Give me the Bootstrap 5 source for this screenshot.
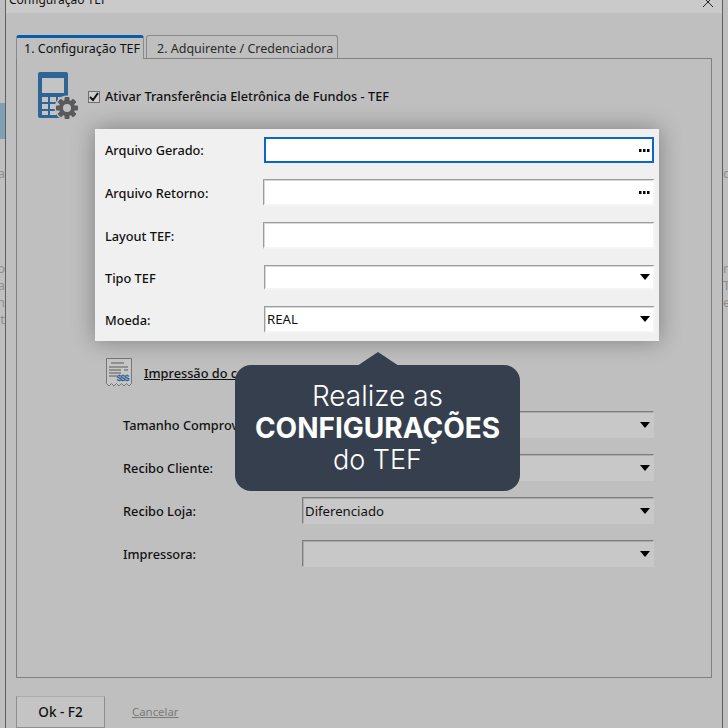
<!DOCTYPE html>
<html lang="pt-BR">
  <head>
    <meta charset="UTF-8" />
    <meta name="viewport" content="width=device-width, initial-scale=1.0" />
    <title>Configuração TEF</title>
    <link
      href="https://cdn.jsdelivr.net/npm/bootstrap@5.3.0/dist/css/bootstrap.min.css"
      rel="stylesheet"
    />
    <style>
      html, body {
        width: 728px;
        height: 728px;
        overflow: hidden;
      }
      body {
        position: relative;
        background-color: #bfbfbf;
        font-family: "Noto Sans", "Open Sans", sans-serif;
        font-size: 13px;
        color: #111;
      }
      .app-window {
        width: 718px;
        height: 728px;
        margin-left: 5px;
        border-left: 1px solid #5f5f5f;
        border-right: 1px solid #5f5f5f;
        background-color: #bfbfbf;
      }
      .title-bar {
        height: 13px;
        background-color: #cacaca;
        overflow: hidden;
        line-height: 10px;
        padding-left: 3px;
        position: relative;
      }
      .title-bar span {
        display: block;
        margin-top: -5px;
        font-size: 12px;
      }
      .title-close {
        position: absolute;
        right: 8px;
        top: -4px;
      }
      .tab-strip {
        margin: 22px 10px 0 10px;
        height: 23px;
        border-bottom: 0;
        gap: 2px;
        flex-wrap: nowrap;
      }
      .tab-strip .nav-link {
        height: 23px;
        padding: 0 7px;
        line-height: 26px;
        font-size: 12.5px;
        white-space: nowrap;
        color: #2b2b2b;
        border: 1px solid #8a8a8a;
        border-bottom: 0;
        border-radius: 3px 3px 0 0;
        background-color: #bfbfbf;
      }
      .tab-strip .nav-link.first-tab {
        width: 128px;
        color: #111;
        border: 1px solid #8a8a8a;
        border-top: 3px solid #0a5ca8;
        border-bottom: 0;
        line-height: 22px;
        background-color: #bfbfbf;
        position: relative;
        z-index: 1;
        margin-bottom: -1px;
        height: 24px;
      }
      .tab-strip .nav-link.second-tab {
        width: 192px;
        padding-left: 10px;
      }
      .tab-body {
        height: 620px;
        margin: 0 10px;
        border: 1px solid #808080;
        position: relative;
      }
      .head-row {
        height: 70px;
        padding: 13px 0 0 21px;
      }
      .check-box {
        width: 12px;
        height: 12px;
        border: 1px solid #6e6e6e;
        background-color: #cfcfcf;
        margin: 19px 5px 0 9px;
      }
      .head-label {
        margin-top: 15px;
        font-weight: 500;
        font-size: 12.75px;
      }
      .spot-panel {
        width: 564px;
        height: 212px;
        margin-left: 78px;
        padding: 8px 0 0 10px;
        background-color: #f0f0f0;
        box-shadow: 0 0 22px rgba(0, 0, 0, 0.33);
        position: relative;
      }
      .spot-row {
        height: 43px;
      }
      .spot-row.first-row {
        height: 42px;
      }
      .spot-row.short-row {
        height: 41px;
      }
      .field-label {
        width: 159px;
        padding-top: 1px;
        font-weight: 500;
        font-size: 12.75px;
        line-height: 27px;
      }
      .first-row .field-label {
        padding-top: 0;
        line-height: 26px;
      }
      .short-row .field-label {
        line-height: 25px;
      }
      .field-box {
        width: 391px;
        height: 27px;
        border-radius: 0;
        padding: 0 3px 0 2px;
        line-height: 24px;
        font-size: 13.2px;
        color: #111;
        background-color: #fff;
        border-style: solid;
        border-width: 1px 2px 2px 1px;
        border-color: #9c9c9c #f5f5f5 #f5f5f5 #9c9c9c;
        box-shadow: inset 1px 1px 0 #d8d8d8;
      }
      .field-box.focus-box {
        width: 390px;
        height: 26px;
        padding: 0 2px;
        border: 2px solid #0a66c8;
        box-shadow: none;
      }
      .field-box.wide-box {
        width: 392px;
        margin-left: -1px;
      }
      .field-box.low-box {
        height: 25px;
      }
      .print-head {
        height: 70px;
        padding: 17px 0 0 89px;
      }
      .print-title {
        margin: 6px 0 0 12px;
        font-weight: 500;
        font-size: 12.75px;
        text-decoration: underline;
      }
      .print-row {
        height: 43px;
        padding-left: 106px;
      }
      .print-row .field-label {
        width: 179px;
      }
      .print-row .field-box {
        width: 352px;
        padding: 0 3px 0 2px;
        border-width: 1px;
        background-color: #c8c8c8;
        border-color: #7d7d7d #c8c8c8 #c8c8c8 #7d7d7d;
        box-shadow: inset 1px 1px 0 #ababab;
      }
      .tooltip-box {
        position: absolute;
        left: 235px;
        top: 365px;
        width: 285px;
        height: 126px;
        background-color: #353f4d;
        border-radius: 16px;
        color: #fff;
        text-align: center;
        font-family: Inter, "Noto Sans", sans-serif;
        padding-top: 15px;
      }
      .tooltip-box::before {
        content: "";
        position: absolute;
        left: 122px;
        top: -13px;
        border-left: 21px solid transparent;
        border-right: 21px solid transparent;
        border-bottom: 14px solid #353f4d;
      }
      .tip-line {
        font-size: 28px;
        line-height: 32px;
        font-weight: 300;
      }
      .tip-line.tip-end {
        font-size: 27px;
        line-height: 31px;
      }
      .tip-strong {
        font-size: 28px;
        font-weight: 700;
        line-height: 32px;
      }
      .footer-row {
        margin: 18px 0 0 10px;
      }
      .ok-btn {
        width: 89px;
        height: 32px;
        border-radius: 0;
        background-color: #c4c4c4;
        border: 1px solid #8f8f8f;
        border-top-color: #ababab;
        font-size: 13.5px;
        font-weight: 500;
        padding: 0;
        color: #111;
      }
      .cancel-link {
        margin: 7px 0 0 27px;
        color: #7a7a7a;
        font-size: 11.4px;
        text-decoration: underline;
      }
      .behind-strip {
        position: absolute;
        top: 0;
        width: 5px;
        height: 728px;
        overflow: hidden;
        color: #8f8f8f;
        font-size: 13px;
        line-height: 17px;
      }
      .behind-left {
        left: 0;
      }
      .behind-right {
        right: 0;
      }
      .behind-strip span {
        position: absolute;
        display: block;
      }
      .behind-bar {
        position: absolute;
        height: 36px;
        width: 5px;
        background-color: #7f9fb5;
      }
    </style>
  </head>
  <body>
    <!-- what shows behind the window -->
    <div class="behind-strip behind-left">
      <div class="behind-bar" style="top: 103px"></div>
      <span style="top: 165px; right: 0">a</span>
      <span style="top: 260px; right: 0">o</span>
      <span style="top: 277px; right: 0">a</span>
      <span style="top: 294px; right: 0">n</span>
      <span style="top: 311px; right: 0">t</span>
    </div>
    <div class="behind-strip behind-right">
      <span style="top: 165px; left: 0">d</span>
      <span style="top: 260px; left: 0">r</span>
      <span style="top: 277px; left: 0">T</span>
      <span style="top: 294px; left: 0">e</span>
    </div>

    <div class="app-window">
      <div class="title-bar">
        <span>Configuração TEF</span>
        <svg class="title-close" width="12" height="12" viewBox="0 0 12 12">
          <path d="M1 1l10 10M11 1L1 11" stroke="#222" stroke-width="1" fill="none" />
        </svg>
      </div>

      <ul class="nav nav-tabs tab-strip">
        <li class="nav-item"><a class="nav-link first-tab" href="#">1. Configuração TEF</a></li>
        <li class="nav-item"><a class="nav-link second-tab" href="#">2. Adquirente / Credenciadora</a></li>
      </ul>

      <div class="tab-body">
        <div class="head-row d-flex">
          <svg width="41" height="49" viewBox="0 0 41 49">
            <rect x="0" y="0" width="30" height="46" rx="2" fill="#2f6497" />
            <rect x="4" y="6" width="22" height="15" fill="#c4c4c4" />
            <g fill="#c4c4c4">
              <rect x="4" y="25" width="6" height="5" /><rect x="12" y="25" width="6" height="5" /><rect x="20" y="25" width="6" height="5" />
              <rect x="4" y="32" width="6" height="5" /><rect x="12" y="32" width="6" height="5" />
              <rect x="4" y="39" width="6" height="4" /><rect x="12" y="39" width="6" height="4" />
            </g>
            <circle cx="29" cy="36" r="12.5" fill="#bfbfbf" />
            <g fill="#5a5a5c">
              <circle cx="29" cy="36" r="8" />
              <rect x="26.5" y="25" width="5" height="22" rx="1" />
              <rect x="26.5" y="25" width="5" height="22" rx="1" transform="rotate(45 29 36)" />
              <rect x="26.5" y="25" width="5" height="22" rx="1" transform="rotate(90 29 36)" />
              <rect x="26.5" y="25" width="5" height="22" rx="1" transform="rotate(135 29 36)" />
            </g>
            <circle cx="29" cy="36" r="4" fill="#bfbfbf" />
          </svg>
          <div class="check-box d-flex">
            <svg width="10" height="10" viewBox="0 0 10 10">
              <path d="M1 5l3 3 5-7" stroke="#111" stroke-width="2" fill="none" />
            </svg>
          </div>
          <div class="head-label">Ativar Transferência Eletrônica de Fundos - TEF</div>
        </div>

        <div class="spot-panel">
          <div class="spot-row first-row d-flex">
            <div class="field-label">Arquivo Gerado:</div>
            <div class="field-box focus-box form-control d-flex justify-content-end align-items-center">
              <svg width="11" height="3" viewBox="0 0 11 3"><path d="M0 0h2.5v3H0zM4 0h2.5v3H4zM8 0h2.5v3H8z" fill="#000" /></svg>
            </div>
          </div>
          <div class="spot-row d-flex">
            <div class="field-label">Arquivo Retorno:</div>
            <div class="field-box wide-box form-control d-flex justify-content-end align-items-center">
              <svg width="11" height="3" viewBox="0 0 11 3"><path d="M0 0h2.5v3H0zM4 0h2.5v3H4zM8 0h2.5v3H8z" fill="#000" /></svg>
            </div>
          </div>
          <div class="spot-row d-flex">
            <div class="field-label">Layout TEF:</div>
            <div class="field-box wide-box form-control"></div>
          </div>
          <div class="spot-row short-row d-flex">
            <div class="field-label">Tipo TEF</div>
            <div class="field-box low-box form-control d-flex justify-content-end align-items-center">
              <svg width="10" height="6" viewBox="0 0 10 6"><path d="M0 0h10L5 6z" fill="#000" /></svg>
            </div>
          </div>
          <div class="spot-row d-flex">
            <div class="field-label">Moeda:</div>
            <div class="field-box form-control d-flex justify-content-between align-items-center">
              <span>REAL</span>
              <svg width="10" height="6" viewBox="0 0 10 6"><path d="M0 0h10L5 6z" fill="#000" /></svg>
            </div>
          </div>
        </div>

        <div class="print-head d-flex">
          <svg width="26" height="29" viewBox="0 0 26 29">
            <path d="M.5.5h25v25l-2.5 2.5-2.5-2.5-2.5 2.5-2.5-2.5-2.5 2.5-2.5-2.5-2.5 2.5-2.5-2.5-2.5 2.5-2.5-2.5z" fill="#c6c6c6" stroke="#777" />
            <path d="M5 5h13M3 9h19M3 12h12M18 12h4M3 15h12M3 18h8" stroke="#5a5a5a" stroke-width="1" fill="none" />
            <text x="10.5" y="23" font-family="Liberation Sans, sans-serif" font-size="9.5" font-weight="700" fill="#2f6497" textLength="13">$$$</text>
          </svg>
          <div class="print-title">Impressão do comprovante</div>
        </div>

        <div class="print-row d-flex">
          <div class="field-label">Tamanho Comprovante:</div>
          <div class="field-box form-control d-flex justify-content-end align-items-center">
            <svg width="10" height="6" viewBox="0 0 10 6"><path d="M0 0h10L5 6z" fill="#000" /></svg>
          </div>
        </div>
        <div class="print-row d-flex">
          <div class="field-label">Recibo Cliente:</div>
          <div class="field-box form-control d-flex justify-content-end align-items-center">
            <svg width="10" height="6" viewBox="0 0 10 6"><path d="M0 0h10L5 6z" fill="#000" /></svg>
          </div>
        </div>
        <div class="print-row d-flex">
          <div class="field-label">Recibo Loja:</div>
          <div class="field-box form-control d-flex justify-content-between align-items-center">
            <span>Diferenciado</span>
            <svg width="10" height="6" viewBox="0 0 10 6"><path d="M0 0h10L5 6z" fill="#000" /></svg>
          </div>
        </div>
        <div class="print-row d-flex">
          <div class="field-label">Impressora:</div>
          <div class="field-box form-control d-flex justify-content-end align-items-center">
            <svg width="10" height="6" viewBox="0 0 10 6"><path d="M0 0h10L5 6z" fill="#000" /></svg>
          </div>
        </div>
      </div>

      <div class="footer-row d-flex">
        <button type="button" class="btn ok-btn">Ok - F2</button>
        <a class="cancel-link" href="#">Cancelar</a>
      </div>
    </div>

    <div class="tooltip-box">
      <div class="tip-line">Realize as</div>
      <div class="tip-strong">CONFIGURAÇÕES</div>
      <div class="tip-line tip-end">do TEF</div>
    </div>

    <script src="https://cdn.jsdelivr.net/npm/bootstrap@5.3.0/dist/js/bootstrap.bundle.min.js"></script>
  </body>
</html>
